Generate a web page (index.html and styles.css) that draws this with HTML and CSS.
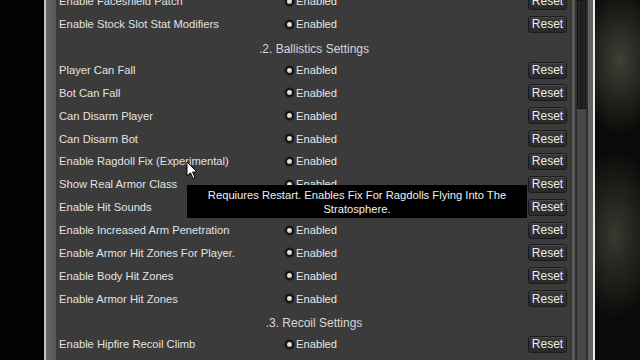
FILE: index.html
```html
<!DOCTYPE html>
<html lang="en">
<head>
  <meta charset="UTF-8">
  <title>Config Manager</title>
  <link rel="stylesheet" href="styles.css">
</head>
<body>
  <div class="screen">
    <div class="void-left"></div>

    <div class="window">
      <div class="frame-left"></div>

      <!-- settings list -->
      <div class="panel">
        <div class="list">
          <div class="row"><span class="label">Enable Faceshield Patch</span><span class="toggle"><i class="dot"></i>Enabled</span><button class="reset">Reset</button></div>
          <div class="row"><span class="label">Enable Stock Slot Stat Modifiers</span><span class="toggle"><i class="dot"></i>Enabled</span><button class="reset">Reset</button></div>
          <div class="row header">.2. Ballistics Settings</div>
          <div class="row"><span class="label">Player Can Fall</span><span class="toggle"><i class="dot"></i>Enabled</span><button class="reset">Reset</button></div>
          <div class="row"><span class="label">Bot Can Fall</span><span class="toggle"><i class="dot"></i>Enabled</span><button class="reset">Reset</button></div>
          <div class="row"><span class="label">Can Disarm Player</span><span class="toggle"><i class="dot"></i>Enabled</span><button class="reset">Reset</button></div>
          <div class="row"><span class="label">Can Disarm Bot</span><span class="toggle"><i class="dot"></i>Enabled</span><button class="reset">Reset</button></div>
          <div class="row"><span class="label">Enable Ragdoll Fix (Experimental)</span><span class="toggle"><i class="dot"></i>Enabled</span><button class="reset">Reset</button></div>
          <div class="row"><span class="label">Show Real Armor Class</span><span class="toggle"><i class="dot"></i>Enabled</span><button class="reset">Reset</button></div>
          <div class="row"><span class="label">Enable Hit Sounds</span><span class="toggle"><i class="dot"></i>Enabled</span><button class="reset">Reset</button></div>
          <div class="row"><span class="label">Enable Increased Arm Penetration</span><span class="toggle"><i class="dot"></i>Enabled</span><button class="reset">Reset</button></div>
          <div class="row"><span class="label">Enable Armor Hit Zones For Player.</span><span class="toggle"><i class="dot"></i>Enabled</span><button class="reset">Reset</button></div>
          <div class="row"><span class="label">Enable Body Hit Zones</span><span class="toggle"><i class="dot"></i>Enabled</span><button class="reset">Reset</button></div>
          <div class="row"><span class="label">Enable Armor Hit Zones</span><span class="toggle"><i class="dot"></i>Enabled</span><button class="reset">Reset</button></div>
          <div class="row header">.3. Recoil Settings</div>
          <div class="row"><span class="label">Enable Hipfire Recoil Climb</span><span class="toggle"><i class="dot"></i>Enabled</span><button class="reset">Reset</button></div>
        </div>
      </div>

      <!-- scrollbar -->
      <div class="scrollbar">
        <div class="track">
          <div class="thumb"></div>
        </div>
      </div>
      <div class="frame-right"></div>
    </div>

    <div class="void-right"></div>

    <!-- hover tooltip -->
    <div class="tooltip">Requiures Restart. Enables Fix For Ragdolls Flying Into The<br>Stratosphere.</div>

    <svg class="cursor" width="12" height="19" viewBox="0 0 12 19">
      <path d="M1 1 L1 15 L4.5 11.8 L7 17.5 L9 16.6 L6.6 11 L11 11 Z" fill="#fff" stroke="#000" stroke-width="1"/>
    </svg>
  </div>
</body>
</html>
```

FILE: styles.css
```css
html, body {
  margin: 0;
  padding: 0;
  background-color: #000;
}
.screen {
  position: relative;
  display: flex;
  width: 640px;
  height: 360px;
  overflow: hidden;
  font-family: "Liberation Sans", Arial, sans-serif;
  font-size: 11.2px;
}
.void-left {
  width: 44px;
  background-color: #030303;
}
.window {
  display: flex;
  width: 547px;
  border-left: 2px solid #c4c4c4;
  border-right: 2px solid #ececec;
}
.frame-left {
  width: 10px;
  background: linear-gradient(to right, #686868, #575757);
}
.panel {
  flex: 1;
  background-color: #3b3b3b;
  padding: 0 5px 0 3px;
  overflow: hidden;
}
.list {
  margin-top: -10px;
}
.row {
  display: flex;
  align-items: center;
  height: 22.86px;
  color: #e2e2e2;
}
.label {
  width: 226px;
}
.toggle {
  flex: 1;
  display: flex;
  align-items: center;
  color: #e6e6e6;
}
.dot {
  width: 5px;
  height: 5px;
  border-radius: 50%;
  background: radial-gradient(circle at 40% 35%, #f4f4f4, #b0b0b0);
  border: 2px solid #141414;
  box-shadow: 0 0 0 1px #2c2c2c;
  margin-right: 2px;
}
.reset {
  width: 39px;
  height: 17px;
  padding: 0;
  font-family: inherit;
  font-size: 12px;
  color: #ececec;
  background: linear-gradient(#363636, #2a2a2a);
  border: 1px solid #1a1a1a;
  border-radius: 3px;
  box-shadow: inset 0 1px 0 #4a4a4a;
}
.header {
  justify-content: center;
  font-size: 12px;
  color: #d6d6d6;
  padding: 4px 0 0 2px;
  box-sizing: border-box;
}
.scrollbar {
  width: 13px;
  background-color: #2e2e2e;
  border-left: 3px solid #5a5a5a;
}
.track {
  width: 9px;
  height: 100%;
  margin-left: 2px;
  background-color: #484848;
}
.thumb {
  height: 109px;
  background: linear-gradient(to right, #2c2c2c, #1c1c1c 45%, #2a2a2a);
  border: 1px solid #141414;
  box-sizing: border-box;
}
.frame-right {
  width: 5px;
  background-color: #626262;
}
.void-right {
  flex: 1;
  background:
    radial-gradient(ellipse 45px 75px at 25px 60px, rgba(100, 100, 85, 0.6), transparent),
    radial-gradient(ellipse 45px 85px at 20px 235px, rgba(95, 95, 80, 0.55), transparent),
    #0a0a09;
}
.tooltip {
  position: absolute;
  left: 187px;
  top: 185px;
  width: 340px;
  height: 33px;
  box-sizing: border-box;
  padding-top: 3px;
  background-color: #000;
  color: #f0f0f0;
  text-align: center;
  line-height: 14px;
}
.cursor {
  position: absolute;
  left: 186px;
  top: 161px;
}
```
